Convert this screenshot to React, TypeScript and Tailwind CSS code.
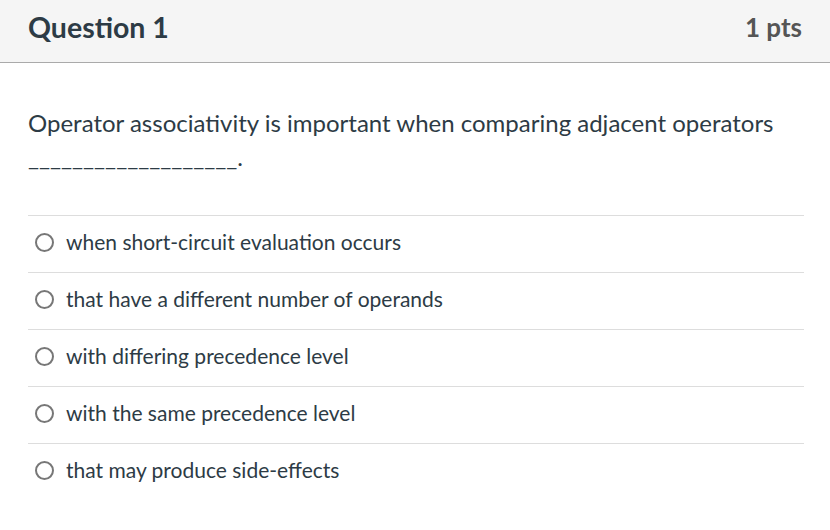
const answers = [
  "when short-circuit evaluation occurs",
  "that have a different number of operands",
  "with differing precedence level",
  "with the same precedence level",
  "that may produce side-effects",
];

const QuestionCard = () => {
  return (
    <div className="w-[830px] h-[530px] bg-white text-[#2d3b45]" style={{ fontFamily: "Lato, 'Open Sans', sans-serif" }}>
      <div className="flex items-center justify-between h-[63px] px-[28px] pb-[8px] bg-[#f5f5f5] border-b border-[#aaaaaa]">
        <h2 className="text-[28.5px] font-bold">Question 1</h2>
        <span className="text-[26px] font-bold text-[#555555]">1 pts</span>
      </div>
      <div className="px-[28px] pt-[43px]">
        <p className="text-[24px] leading-[34px]">
          Operator associativity is important when comparing adjacent operators
          <br />
          ___________________.
        </p>
        <div className="mt-[41px] w-[776px]">
          {answers.map((answer) => (
            <div key={answer} className="flex items-center h-[57px] border-t border-[#dddddd] pl-[7px] pb-[4px]">
              <span className="w-[19px] h-[19px] rounded-full border-2 border-[#777777] shrink-0" />
              <span className="ml-[12px] text-[21px]">{answer}</span>
            </div>
          ))}
        </div>
      </div>
    </div>
  );
};

export default function App() {
  return <QuestionCard />;
}
